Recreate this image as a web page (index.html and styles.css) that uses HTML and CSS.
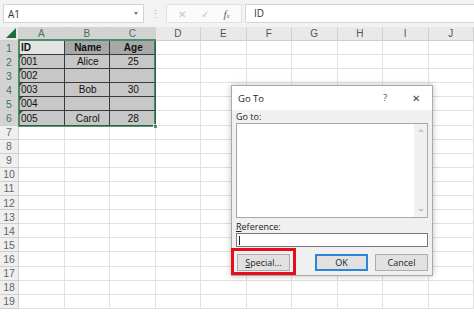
FILE: index.html
```html
<!DOCTYPE html>
<html lang="en">
<head>
    <meta charset="UTF-8">
    <title>Go To - Special</title>
    <link rel="stylesheet" href="styles.css">
</head>
<body>
    <div class="app">
        <div class="toolbar">
            <div class="name-box">
                <span>A1</span>
                <span class="drop"></span>
            </div>
            <div class="grip">&#8942;</div>
            <div class="fx-buttons">
                <span class="fx-btn">&#10005;</span>
                <span class="fx-btn">&#10003;</span>
                <span class="fx-btn fx">f<small>x</small></span>
            </div>
            <div class="formula-input">ID</div>
        </div>

        <div class="sheet" id="sheet"></div>

        <div class="selection"><span class="handle"></span></div>

        <div class="dialog">
            <div class="dialog-title">
                <span>Go To</span>
                <span class="title-btns"><span>?</span><span class="close">&#10005;</span></span>
            </div>
            <div class="dialog-body">
                <div class="label">Go to:</div>
                <div class="listbox">
                    <div class="scroll">
                        <span class="arrow up"></span>
                        <span class="arrow down"></span>
                    </div>
                </div>
                <div class="label"><u>R</u>eference:</div>
                <div class="ref-input"><span class="caret"></span></div>
                <div class="buttons">
                    <button class="btn special"><u>S</u>pecial...</button>
                    <button class="btn ok">OK</button>
                    <button class="btn">Cancel</button>
                </div>
            </div>
        </div>

        <div class="highlight"></div>
    </div>

    <script>
        const sheet = document.getElementById('sheet');
        const cols = ['A', 'B', 'C', 'D', 'E', 'F', 'G', 'H', 'I', 'J'];
        const data = [
            ['ID', 'Name', 'Age'],
            ['001', 'Alice', '25'],
            ['002', '', ''],
            ['003', 'Bob', '30'],
            ['004', '', ''],
            ['005', 'Carol', '28']
        ];

        function addCell(cls, text) {
            const div = document.createElement('div');
            div.className = cls;
            div.textContent = text || '';
            sheet.appendChild(div);
            return div;
        }

        // corner + column headers
        addCell('corner');
        cols.forEach((c, i) => addCell(i < 3 ? 'col-head sel' : 'col-head', c));

        for (let r = 1; r <= 19; r++) {
            addCell(r <= 6 ? 'row-head sel' : 'row-head', r);
            cols.forEach((c, i) => {
                if (r <= 6 && i < 3) {
                    let cls = 'cell tbl';
                    if (r === 1 && i === 0) cls += ' active head';
                    else if (r === 1) cls += ' head center';
                    else if (i > 0) cls += ' center';
                    if (i === 0 && r > 1) cls += ' flag';
                    addCell(cls, data[r - 1][i]);
                } else {
                    addCell('cell');
                }
            });
        }
    </script>
</body>
</html>
```

FILE: styles.css
```css
* {
    margin: 0;
    padding: 0;
    box-sizing: border-box;
}

body {
    background: #ffffff;
    font-family: 'Open Sans', 'Liberation Sans', sans-serif;
    overflow: hidden;
}

.app {
    position: relative;
    width: 474px;
    height: 312px;
    overflow: hidden;
}

/* formula bar */
.toolbar {
    height: 27px;
    background: #f3f3f3;
    display: flex;
    align-items: center;
    padding: 3px 0 3px 3px;
}

.name-box {
    width: 141px;
    height: 19px;
    background: white;
    border: 1px solid #d4d4d4;
    display: flex;
    align-items: center;
    justify-content: space-between;
    padding: 0 5px 0 4px;
    font-size: 10px;
    color: #333;
}

.drop {
    width: 0;
    height: 0;
    border-left: 2.5px solid transparent;
    border-right: 2.5px solid transparent;
    border-top: 3px solid #777;
}

.grip {
    width: 22px;
    text-align: center;
    color: #b5b5b5;
    font-size: 11px;
}

.fx-buttons {
    width: 76px;
    height: 19px;
    background: #fafafa;
    border: 1px solid #e2e2e2;
    display: flex;
    align-items: center;
    justify-content: space-around;
    padding: 0 4px;
    color: #c4c4c4;
    font-size: 10px;
}

.fx-btn.fx {
    color: #666;
    font-family: 'Liberation Serif', serif;
    font-style: italic;
    font-size: 11px;
}

.fx-btn.fx small {
    font-size: 7px;
}

.formula-input {
    flex: 1;
    height: 19px;
    margin-left: 3px;
    background: white;
    border: 1px solid #d4d4d4;
    border-right: none;
    padding-left: 8px;
    font-size: 10px;
    line-height: 17px;
    color: #333;
}

/* worksheet */
.sheet {
    display: grid;
    grid-template-columns: 19px repeat(10, 45.5px);
    grid-template-rows: 14px repeat(19, 14.1px);
    font-family: 'Liberation Sans', sans-serif;
}

.corner,
.col-head,
.row-head {
    background: #e9e9e9;
    color: #555;
    border-right: 1px solid #d0d0d0;
    border-bottom: 1px solid #cfcfcf;
    display: flex;
    align-items: center;
    justify-content: center;
    font-size: 10px;
}

.corner {
    position: relative;
}

.corner::after {
    content: '';
    position: absolute;
    right: 2px;
    bottom: 2px;
    border-left: 10px solid transparent;
    border-bottom: 10px solid #1e6b3f;
}

.row-head {
    font-size: 10.5px;
    background: #efefef;
    color: #666;
}

.col-head.sel,
.row-head.sel {
    background: #d3d3d3;
    color: #3f7552;
}

.cell {
    border-right: 1px solid #e1e1e1;
    border-bottom: 1px solid #e1e1e1;
    font-size: 10px;
    color: #111;
    display: flex;
    align-items: center;
    padding-left: 2px;
    white-space: nowrap;
    position: relative;
}

.cell.tbl {
    background: #c7c7c7;
    border-right-color: #3a3a3a;
    border-bottom-color: #3a3a3a;
}

.cell.head {
    background: #a8a8a8;
    font-weight: bold;
}

.cell.active {
    background: #e3e3e3;
}

.cell.center {
    justify-content: center;
}

.cell.flag::before {
    content: '';
    position: absolute;
    left: 0;
    top: 0;
    border-top: 4px solid #1e6b3f;
    border-right: 4px solid transparent;
}

.selection {
    position: absolute;
    left: 18px;
    top: 39px;
    width: 138px;
    height: 88px;
    border: 2px solid #217346;
    opacity: 0.75;
}

.handle {
    position: absolute;
    right: -4px;
    bottom: -4px;
    width: 5px;
    height: 5px;
    background: #217346;
    border: 1px solid white;
}

/* dialog */
.dialog {
    position: absolute;
    left: 231px;
    top: 85px;
    width: 202px;
    height: 191px;
    background: #f0f0f0;
    border: 1px solid #a9a9a9;
    box-shadow: 0 0 6px rgba(0, 0, 0, 0.25);
    font-family: 'Open Sans', 'Noto Sans', sans-serif;
    font-size: 9px;
    color: #222;
}

.dialog-title {
    height: 24px;
    background: white;
    display: flex;
    align-items: center;
    justify-content: space-between;
    padding: 0 12px 0 6px;
    font-size: 9.5px;
}

.title-btns {
    display: flex;
    gap: 25px;
    color: #444;
}

.close {
    font-size: 10px;
}

.dialog-body {
    padding: 0 4px;
}

.label {
    height: 12px;
    line-height: 12px;
    margin-top: 1px;
}

.listbox {
    height: 95px;
    background: white;
    border: 1px solid #a8a8a8;
    display: flex;
    justify-content: flex-end;
}

.scroll {
    width: 13px;
    background: #f0f0f0;
    display: flex;
    flex-direction: column;
    justify-content: space-between;
    align-items: center;
    padding: 5px 0;
}

.arrow {
    width: 0;
    height: 0;
    border-left: 3px solid transparent;
    border-right: 3px solid transparent;
}

.arrow.up {
    border-bottom: 3px solid #c4c4c4;
}

.arrow.down {
    border-top: 3px solid #c4c4c4;
}

.listbox + .label {
    margin-top: 3px;
}

.ref-input {
    height: 14px;
    background: white;
    border: 1px solid #7a7a7a;
    display: flex;
    align-items: center;
    padding-left: 2px;
}

.caret {
    width: 1px;
    height: 9px;
    background: #222;
}

.buttons {
    display: flex;
    margin-top: 7px;
    padding-left: 1px;
}

.btn {
    width: 53px;
    height: 17px;
    background: #e1e1e1;
    border: 1px solid #adadad;
    font-family: inherit;
    font-size: 9px;
    color: #222;
}

.btn.special {
    margin-right: 25px;
}

.btn.ok {
    border: 2px solid #2b86d8;
    margin-right: 7px;
}

.highlight {
    position: absolute;
    left: 231px;
    top: 248px;
    width: 65px;
    height: 27px;
    border: 3px solid #e3101c;
}
```
